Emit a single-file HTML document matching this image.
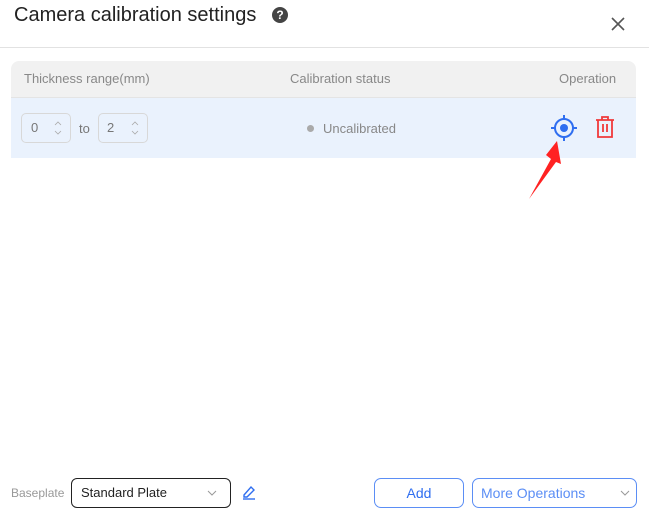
<!DOCTYPE html>
<html><head><style>
body{margin:0;width:649px;height:520px;background:#fff;font-family:"Liberation Sans",sans-serif;position:relative;overflow:hidden}
.a{position:absolute}
</style></head><body>
<div class="a" style="left:14px;top:4px;font-size:20px;color:#222">Camera calibration settings</div>
<div class="a" style="left:272px;top:7px;width:16px;height:16px;border-radius:50%;background:#444;color:#fff;font-size:12px;font-weight:bold;text-align:center;line-height:16px">?</div>
<svg class="a" style="left:610px;top:16px" width="16" height="16"><path d="M2 2L14 14M14 2L2 14" stroke="#555" stroke-width="1.6"/></svg>
<div class="a" style="left:0;top:47px;width:649px;height:1px;background:#e2e2e2"></div>
<div class="a" style="left:11px;top:61px;width:625px;height:36px;background:#f1f1f1;border-radius:8px 8px 0 0;border-bottom:1px solid #e4e4e4"></div>
<div class="a" style="left:24px;top:71px;font-size:13px;color:#888">Thickness range(mm)</div>
<div class="a" style="left:290px;top:71px;font-size:13px;color:#888">Calibration status</div>
<div class="a" style="left:559px;top:71px;font-size:13px;color:#888">Operation</div>
<div class="a" style="left:11px;top:98px;width:625px;height:60px;background:#eaf2fd"></div>
<div class="a" style="left:21px;top:113px;width:50px;height:30px;border:1px solid #d8d8d8;border-radius:5px;box-sizing:border-box"></div>
<div class="a" style="left:31px;top:120px;font-size:13px;color:#777">0</div>
<svg class="a" style="left:54px;top:121px" width="8" height="14"><path d="M1 4L4 1L7 4M1 10L4 13L7 10" fill="none" stroke="#aaa" stroke-width="0.8"/></svg>
<div class="a" style="left:79px;top:121px;font-size:13px;color:#777">to</div>
<div class="a" style="left:98px;top:113px;width:50px;height:30px;border:1px solid #d8d8d8;border-radius:5px;box-sizing:border-box"></div>
<div class="a" style="left:107px;top:120px;font-size:13px;color:#777">2</div>
<svg class="a" style="left:131px;top:121px" width="8" height="14"><path d="M1 4L4 1L7 4M1 10L4 13L7 10" fill="none" stroke="#aaa" stroke-width="0.8"/></svg>
<div class="a" style="left:307px;top:125px;width:7px;height:7px;border-radius:50%;background:#aaa"></div>
<div class="a" style="left:323px;top:121px;font-size:13px;color:#888">Uncalibrated</div>
<svg class="a" style="left:550px;top:114px" width="28" height="28"><circle cx="14" cy="14" r="9" fill="none" stroke="#2f6ef0" stroke-width="2"/><circle cx="14" cy="14" r="4" fill="#2f6ef0"/><path d="M14 1V6M14 22V27M1 14H6M22 14H27" stroke="#2f6ef0" stroke-width="2"/></svg>
<svg class="a" style="left:594px;top:115px" width="22" height="26"><path d="M2 5H20M8 5V2H14V5M4 5V22H18V5M9 9V17M13 9V17" fill="none" stroke="#f03a3a" stroke-width="1.8"/></svg>
<svg class="a" style="left:520px;top:135px" width="50" height="70"><path d="M37 6L26 20L31 24L9 64L36 27L41 29Z" fill="#f22"/></svg>
<div class="a" style="left:11px;top:486px;font-size:12px;color:#999">Baseplate</div>
<div class="a" style="left:71px;top:478px;width:160px;height:30px;border:1.5px solid #222;border-radius:6px;box-sizing:border-box"></div>
<div class="a" style="left:81px;top:485px;font-size:13px;color:#222">Standard Plate</div>
<svg class="a" style="left:207px;top:490px" width="10" height="7"><path d="M1 1L5 5L9 1" fill="none" stroke="#999"/></svg>
<svg class="a" style="left:241px;top:484px" width="16" height="16"><path d="M3 11L10 3L13 6L6 13H3Z" fill="none" stroke="#2f6ef0" stroke-width="1.4"/><path d="M2 15H14" stroke="#2f6ef0" stroke-width="1.4"/></svg>
<div class="a" style="left:374px;top:478px;width:90px;height:30px;border:1px solid #5b8ef5;border-radius:7px;box-sizing:border-box;color:#2f6ef0;font-size:14px;text-align:center;line-height:28px">Add</div>
<div class="a" style="left:472px;top:478px;width:165px;height:30px;border:1px solid #5b8ef5;border-radius:7px;box-sizing:border-box;color:#5b8ef5;font-size:14px;line-height:28px;padding-left:8px">More Operations</div>
<svg class="a" style="left:620px;top:490px" width="10" height="7"><path d="M1 1L5 5L9 1" fill="none" stroke="#999"/></svg>
</body></html>
